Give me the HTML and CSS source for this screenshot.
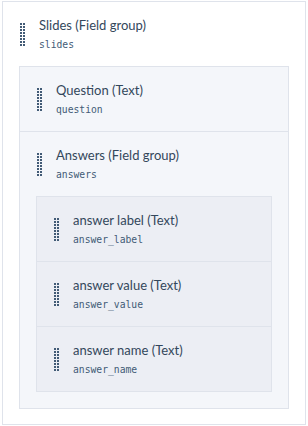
FILE: index.html
```html
<!DOCTYPE html>
<html lang="en">
  <head>
    <meta charset="UTF-8" />
    <meta name="viewport" content="width=device-width, initial-scale=1.0" />
    <title>Fields</title>
    <link rel="stylesheet" href="styles.css">
  </head>
  <body>
    <div class="group outer">
      <div class="row">
        <span class="handle"></span>
        <div class="info">
          <p class="label">Slides (Field group)</p>
          <code class="name">slides</code>
        </div>
      </div>
      <div class="group level-1">
        <div class="row">
          <span class="handle"></span>
          <div class="info">
            <p class="label">Question (Text)</p>
            <code class="name">question</code>
          </div>
        </div>
        <div class="sub">
          <div class="row">
            <span class="handle"></span>
            <div class="info">
              <p class="label">Answers (Field group)</p>
              <code class="name">answers</code>
            </div>
          </div>
          <div class="group level-2">
            <div class="row">
              <span class="handle"></span>
              <div class="info">
                <p class="label">answer label (Text)</p>
                <code class="name">answer_label</code>
              </div>
            </div>
            <div class="row">
              <span class="handle"></span>
              <div class="info">
                <p class="label">answer value (Text)</p>
                <code class="name">answer_value</code>
              </div>
            </div>
            <div class="row">
              <span class="handle"></span>
              <div class="info">
                <p class="label">answer name (Text)</p>
                <code class="name">answer_name</code>
              </div>
            </div>
          </div>
        </div>
      </div>
    </div>
    <script>
      // drag handle: 2 columns x 8 rows of small dots
      const dots = [];
      for (let r = 0; r < 8; r++) {
        for (let c = 0; c < 2; c++) {
          dots.push(`<rect x="${c * 3}" y="${r * 3}" width="2" height="2"/>`);
        }
      }
      const svg = `<svg width="5" height="23" viewBox="0 0 5 23" fill="#425b76">${dots.join("")}</svg>`;
      document.querySelectorAll(".handle").forEach((h) => {
        h.innerHTML = svg;
      });
    </script>
  </body>
</html>
```

FILE: styles.css
```css
* {
  margin: 0;
  padding: 0;
  box-sizing: border-box;
}
body {
  margin: 1px 2px 0 2px;
  background-color: #ffffff;
  font-family: "Lato", "Noto Sans", sans-serif;
  color: #33475b;
}
.group {
  border: 1px solid #dfe3eb;
}
.outer {
  background-color: #ffffff;
  padding: 0 16px 15px 16px;
}
.outer > .row {
  margin: 0 -16px;
}
.level-1 {
  background-color: #f4f6fa;
}
.level-1 > .row {
  border-bottom: 1px solid #dfe3eb;
}
.level-1 > .sub {
  padding: 0 16px 16px 16px;
}
.sub > .row {
  margin: 0 -16px;
}
.level-2 {
  background-color: #eceef4;
}
.level-2 > .row + .row {
  border-top: 1px solid #dfe3eb;
}
.row {
  box-sizing: content-box;
  height: 64px;
  display: flex;
  align-items: center;
  padding-left: 17px;
  gap: 14px;
}
.handle {
  display: flex;
  width: 5px;
  height: 23px;
  flex-shrink: 0;
}
.info {
  display: flex;
  flex-direction: column;
  gap: 4px;
}
.label {
  font-size: 13px;
  line-height: 18px;
}
.name {
  font-family: "DejaVu Sans Mono", monospace;
  font-size: 9.7px;
  line-height: 14px;
  color: #425b76;
}
```
